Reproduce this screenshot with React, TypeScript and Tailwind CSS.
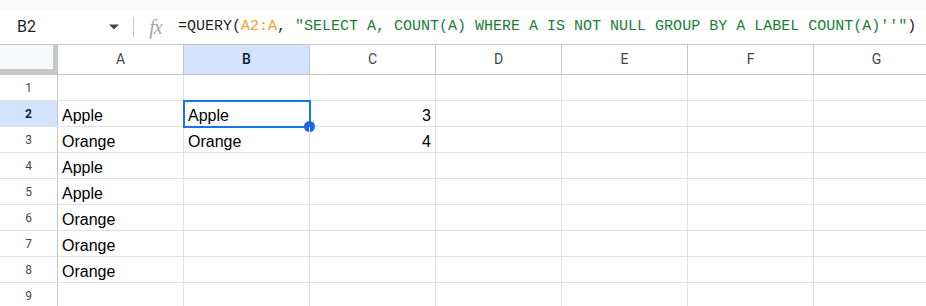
import React from 'react';

// Google Sheets style grid with a QUERY formula
const COLS = ['A', 'B', 'C', 'D', 'E', 'F', 'G'];

const colA = ['', 'Apple', 'Orange', 'Apple', 'Apple', 'Orange', 'Orange', 'Orange', ''];
const colB = ['', 'Apple', 'Orange', '', '', '', '', '', ''];
const colC = ['', '3', '4', '', '', '', '', '', ''];

const FormulaBar: React.FC = () => (
  <div className="h-[35px] shrink-0 flex items-center bg-white border-b border-[#c4c7c5]">
    <div className="w-[133px] flex items-center pl-[17px] pr-[14px] font-['Roboto',sans-serif] text-[16px] text-[#1f1f1f]">
      <span className="flex-1">B2</span>
      <svg width="10" height="6" viewBox="0 0 10 5">
        <path d="M0 0 L10 0 L5 5 Z" fill="#444746" />
      </svg>
    </div>
    <div className="w-px h-[20px] bg-[#c4c7c5]" />
    <div className="w-[44px] flex justify-center pr-[1px]">
      <span className="font-['Liberation_Serif',serif] italic text-[20px] leading-none text-[#a6a6a6] tracking-[-1px]">fx</span>
    </div>
    <div className="font-['Liberation_Mono',monospace] text-[15px] text-[#1f1f1f] whitespace-nowrap">
      =QUERY(<span className="text-[#f4a125]">A2:A</span>,{' '}
      <span className="text-[#188038]">"SELECT A, COUNT(A) WHERE A IS NOT NULL GROUP BY A LABEL COUNT(A)''"</span>)
    </div>
  </div>
);

const HeaderRow: React.FC = () => (
  <div className="flex h-[30px] shrink-0 border-b border-[#c4c7c5] font-['Roboto',sans-serif] text-[14px]">
    <div className="w-[58px] shrink-0 bg-[#c4c7c5] flex flex-col">
      <div className="w-[53px] h-[24px] bg-[#f8f9fa]" />
    </div>
    {COLS.map((c) => (
      <div
        key={c}
        className={
          c === 'B'
            ? 'w-[126px] shrink-0 border-r border-[#c4c7c5] bg-[#d3e3fd] text-[#0b1f33] font-medium flex items-center justify-center'
            : 'w-[126px] shrink-0 border-r border-[#c4c7c5] bg-white text-[#444746] flex items-center justify-center'
        }
      >
        {c}
      </div>
    ))}
  </div>
);

const Row: React.FC<{ i: number }> = ({ i }) => {
  const n = i + 1;
  const active = n === 2;
  return (
    <div className="flex h-[26px] shrink-0 border-b border-[#e1e1e1]">
      <div
        className={
          active
            ? 'w-[58px] shrink-0 border-r border-[#c4c7c5] bg-[#d3e3fd] text-[#0b1f33] font-bold flex items-center justify-center font-["Roboto",sans-serif] text-[12px]'
            : 'w-[58px] shrink-0 border-r border-[#c4c7c5] bg-white text-[#444746] flex items-center justify-center font-["Roboto",sans-serif] text-[12px]'
        }
      >
        {n}
      </div>
      <div className="w-[126px] shrink-0 border-r border-[#e1e1e1] flex items-center px-[4px] pt-[4px]">{colA[i]}</div>
      <div className="w-[126px] shrink-0 border-r border-[#e1e1e1] flex items-center px-[4px] pt-[4px] relative">
        {colB[i]}
        {active && (
          <div className="absolute -left-[1px] -top-[1px] w-[128px] h-[28px] border-2 border-[#1a73e8]">
            <div className="absolute -right-[6px] -bottom-[6px] w-[11px] h-[11px] rounded-full bg-[#1a66dc]" />
          </div>
        )}
      </div>
      <div className="w-[126px] shrink-0 border-r border-[#e1e1e1] flex items-center justify-end px-[4px] pt-[4px]">{colC[i]}</div>
      {COLS.slice(3).map((c) => (
        <div key={c} className="w-[126px] shrink-0 border-r border-[#e1e1e1]" />
      ))}
    </div>
  );
};

const App: React.FC = () => {
  return (
    <div className="w-[926px] h-[306px] overflow-hidden bg-white flex flex-col">
      <div className="h-[10px] shrink-0 bg-[#f9fbfd]" />
      <FormulaBar />
      <HeaderRow />
      <div className="flex flex-col font-['Liberation_Sans',Arial,sans-serif] text-[16px] text-black">
        {colA.map((_, i) => (
          <Row key={i} i={i} />
        ))}
      </div>
    </div>
  );
};

export default App;
